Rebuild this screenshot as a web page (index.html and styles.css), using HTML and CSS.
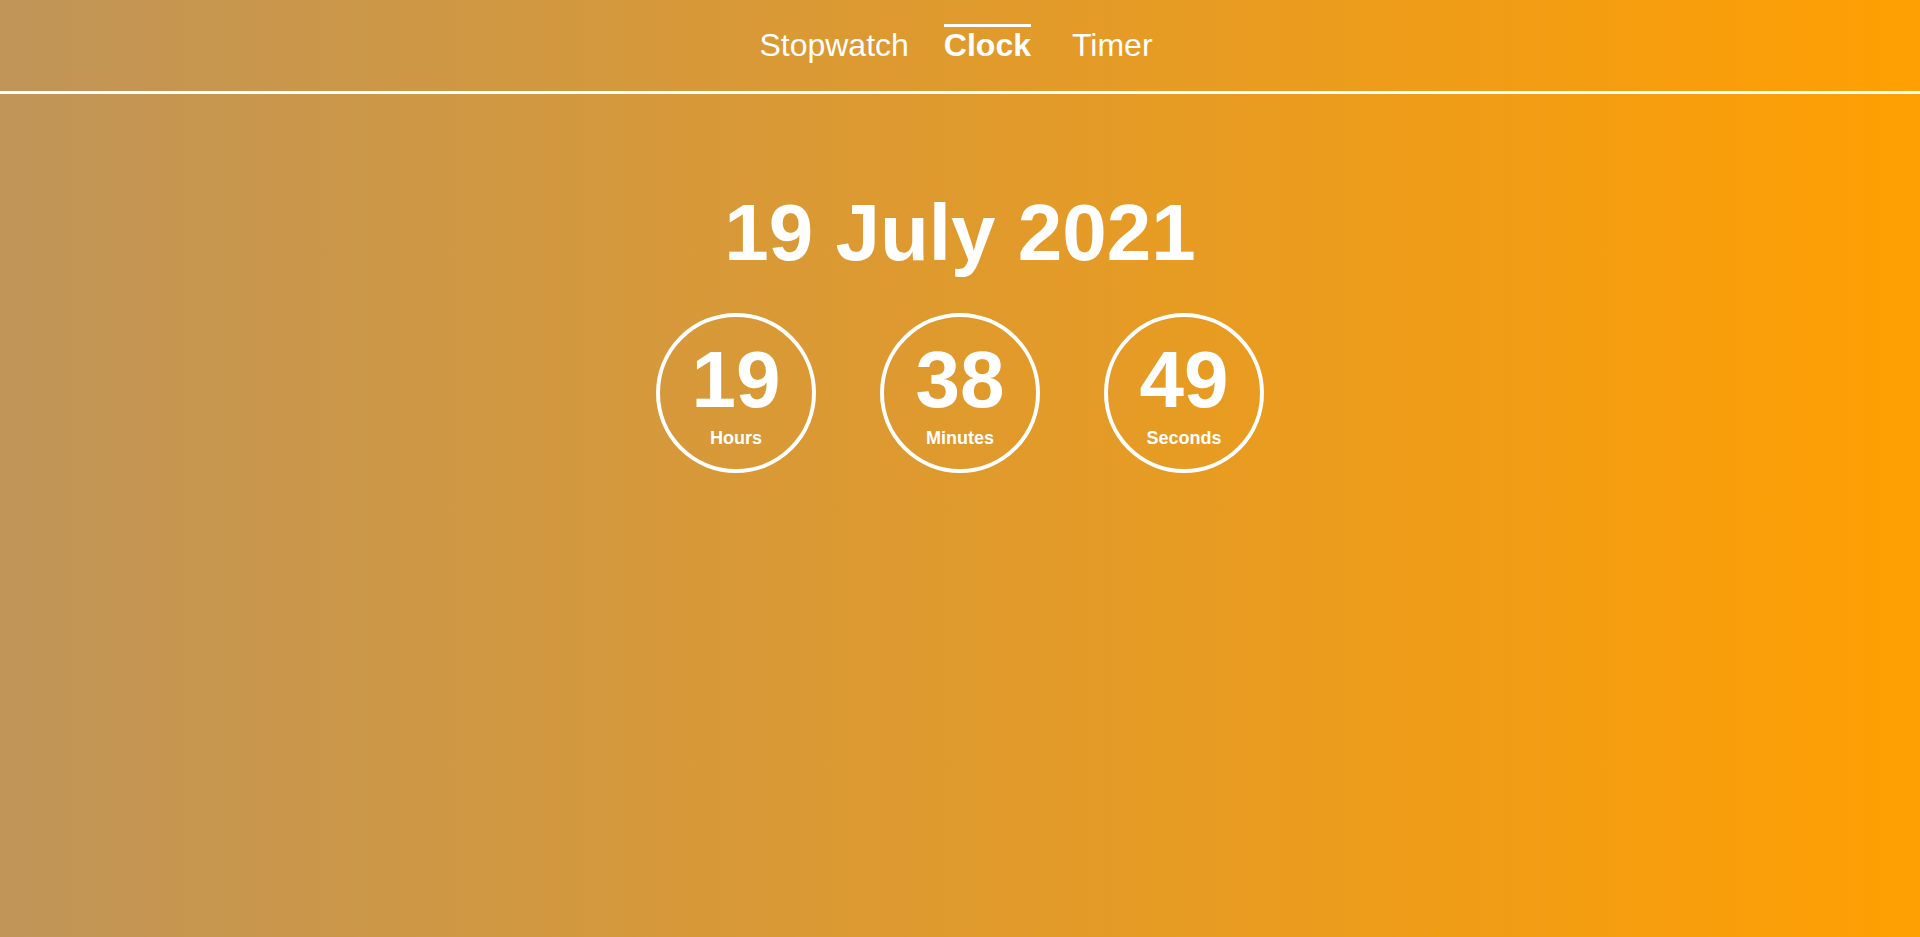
FILE: index.html
```html
<!DOCTYPE html>
<html lang="en">
<head>
<meta charset="utf-8">
<title>Clock</title>
<link rel="stylesheet" href="styles.css">
</head>
<body>
<header class="topbar">
  <nav class="tabs">
    <a class="tab" href="#">Stopwatch</a>
    <a class="tab tab-active" href="#">Clock</a>
    <a class="tab" href="#">Timer</a>
  </nav>
</header>
<main class="clock">
  <h1 class="date">19 July 2021</h1>
  <div class="units">
    <div class="unit">
      <span class="unit-value">19</span>
      <span class="unit-label">Hours</span>
    </div>
    <div class="unit">
      <span class="unit-value">38</span>
      <span class="unit-label">Minutes</span>
    </div>
    <div class="unit">
      <span class="unit-value">49</span>
      <span class="unit-label">Seconds</span>
    </div>
  </div>
</main>
</body>
</html>
```

FILE: styles.css
```css
html, body {
  margin: 0;
  padding: 0;
}

body {
  min-height: 100vh;
  background: linear-gradient(to right, #c09558, #ff9f02);
  color: #ffffff;
  font-family: "Liberation Sans", Arial, sans-serif;
}

.topbar {
  height: 67px;
  padding-top: 24px;
  border-bottom: 3px solid #ffffff;
}

.tabs {
  display: flex;
  justify-content: center;
  align-items: flex-start;
  gap: 35px;
  padding-right: 8px;
}

.tab {
  color: #ffffff;
  text-decoration: none;
  font-size: 32px;
  line-height: 37px;
  border-top: 3px solid transparent;
}

.tab-active {
  font-weight: bold;
  border-top-color: #ffffff;
  margin-right: 6px;
}

.clock {
  display: flex;
  flex-direction: column;
  align-items: center;
  padding-top: 99px;
}

.date {
  margin: 0 0 40px 0;
  font-size: 80px;
  line-height: 80px;
  font-weight: bold;
}

.units {
  display: flex;
  gap: 64px;
}

.unit {
  box-sizing: border-box;
  width: 160px;
  height: 160px;
  border: 4px solid #ffffff;
  border-radius: 50%;
  display: flex;
  flex-direction: column;
  align-items: center;
  justify-content: center;
}

.unit-value {
  font-size: 80px;
  line-height: 80px;
  font-weight: bold;
}

.unit-label {
  margin-top: 9px;
  font-size: 18px;
  line-height: 18px;
  font-weight: bold;
}
```
